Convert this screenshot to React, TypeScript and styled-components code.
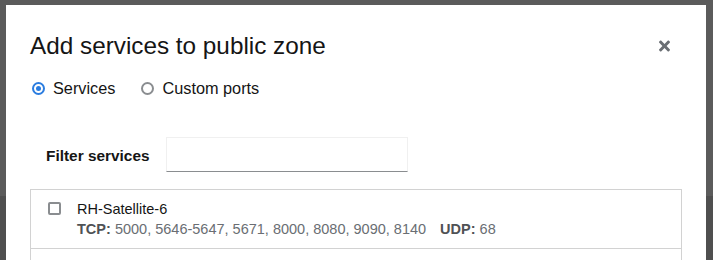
import React, { useState } from "react";
import styled, { createGlobalStyle } from "styled-components";

const GlobalStyle = createGlobalStyle`
  html, body {
    margin: 0;
    padding: 0;
    height: 100%;
    overflow: hidden;
  }
  body {
    background: linear-gradient(to bottom, #5b5b5b 0, #5b5b5b 196px, #4f4f4f 196px);
    font-family: "Liberation Sans", Arial, sans-serif;
    color: #151515;
  }
`;

const Backdrop = styled.div`
  padding: 5px 7px 0 6px;
`;

const ModalBox = styled.div`
  background: #ffffff;
  min-height: 320px;
  padding: 24px 24px 0 24px;
  box-sizing: border-box;
`;

const Header = styled.header`
  display: flex;
  align-items: flex-start;
  justify-content: space-between;
`;

const Title = styled.h1`
  margin: 0;
  font-family: "Liberation Sans", Arial, sans-serif;
  font-weight: 400;
  font-size: 24.3px;
  line-height: 33px;
  color: #151515;
`;

const CloseButton = styled.button`
  margin-top: 3px;
  padding: 6px 12px;
  border: none;
  background: none;
  display: flex;
  cursor: pointer;
  color: #6a6e73;
`;

const RadioRow = styled.div`
  display: flex;
  align-items: center;
  gap: 26px;
  margin-top: 14px;
  padding-left: 2px;
`;

const RadioLabel = styled.label`
  display: flex;
  align-items: center;
  gap: 8px;
  font-size: 16.3px;
  line-height: 24px;
  color: #151515;
  cursor: pointer;
`;

const RadioCircle = styled.span<{ $checked: boolean }>`
  width: 13px;
  height: 13px;
  box-sizing: border-box;
  border-radius: 50%;
  border: 2px solid ${(p) => (p.$checked ? "#2b7de0" : "#8a8d90")};
  display: flex;
  align-items: center;
  justify-content: center;

  &::after {
    content: "";
    width: 5px;
    height: 5px;
    border-radius: 50%;
    background: ${(p) => (p.$checked ? "#2b7de0" : "transparent")};
  }
`;

const FilterRow = styled.div`
  display: flex;
  align-items: center;
  gap: 16px;
  margin-top: 37px;
  padding-left: 16px;
`;

const FilterLabel = styled.label`
  margin-top: 2px;
  font-size: 15.4px;
  font-weight: 700;
  line-height: 1.5;
  color: #151515;
`;

const FilterInput = styled.input`
  width: 242px;
  height: 35px;
  box-sizing: border-box;
  border: 1px solid #f0f0f0;
  border-bottom-color: #8a8d90;
  outline: none;
  padding: 0 8px;
  font-size: 14px;
  font-family: inherit;
`;

const Table = styled.div`
  margin-top: 17px;
  border: 1px solid #d2d2d2;
  border-bottom: none;
`;

const Row = styled.div`
  display: flex;
  align-items: flex-start;
  gap: 16px;
  padding: 9px 0 9px 17px;
  border-bottom: 1px solid #d2d2d2;
  min-height: 40px;
`;

const CheckBox = styled.span`
  margin-top: 3px;
  width: 13px;
  height: 13px;
  box-sizing: border-box;
  border: 2px solid #8a8d90;
  border-radius: 2px;
  flex: none;
`;

const RowText = styled.div`
  display: flex;
  flex-direction: column;
  font-size: 14.5px;
  line-height: 20px;
`;

const ServiceName = styled.span`
  color: #151515;
`;

const Ports = styled.span`
  color: #6a6e73;
  display: flex;
  gap: 14px;

  b {
    color: #4f5255;
    font-weight: 700;
  }
`;

interface Service {
  name: string;
  tcp: string;
  udp: string;
}

const services: Service[] = [
  {
    name: "RH-Satellite-6",
    tcp: "5000, 5646-5647, 5671, 8000, 8080, 9090, 8140",
    udp: "68",
  },
];

function CloseIcon() {
  return (
    <svg width="11" height="16" viewBox="0 0 352 512" fill="currentColor">
      <path d="M242.72 256l100.07-100.07c12.28-12.28 12.28-32.19 0-44.48l-22.24-22.24c-12.28-12.28-32.19-12.28-44.48 0L176 189.28 75.93 89.21c-12.28-12.28-32.19-12.28-44.48 0L9.21 111.45c-12.28 12.28-12.28 32.19 0 44.48L109.28 256 9.21 356.07c-12.28 12.28-12.28 32.19 0 44.48l22.24 22.24c12.28 12.28 32.2 12.28 44.48 0L176 322.72l100.07 100.07c12.28 12.28 32.2 12.28 44.48 0l22.24-22.24c12.28-12.28 12.28-32.19 0-44.48L242.72 256z" />
    </svg>
  );
}

export default function App() {
  const [mode, setMode] = useState("services");
  return (
    <>
      <GlobalStyle />
      <Backdrop>
        <ModalBox>
          <Header>
            <Title>Add services to public zone</Title>
            <CloseButton aria-label="Close">
              <CloseIcon />
            </CloseButton>
          </Header>
          <RadioRow>
            <RadioLabel onClick={() => setMode("services")}>
              <RadioCircle $checked={mode === "services"} />
              Services
            </RadioLabel>
            <RadioLabel onClick={() => setMode("ports")}>
              <RadioCircle $checked={mode === "ports"} />
              Custom ports
            </RadioLabel>
          </RadioRow>
          <FilterRow>
            <FilterLabel htmlFor="filter-services">Filter services</FilterLabel>
            <FilterInput id="filter-services" type="text" />
          </FilterRow>
          <Table>
            {services.map((s) => (
              <Row key={s.name}>
                <CheckBox />
                <RowText>
                  <ServiceName>{s.name}</ServiceName>
                  <Ports>
                    <span>
                      <b>TCP:</b> {s.tcp}
                    </span>
                    <span>
                      <b>UDP:</b> {s.udp}
                    </span>
                  </Ports>
                </RowText>
              </Row>
            ))}
            <Row />
          </Table>
        </ModalBox>
      </Backdrop>
    </>
  );
}
